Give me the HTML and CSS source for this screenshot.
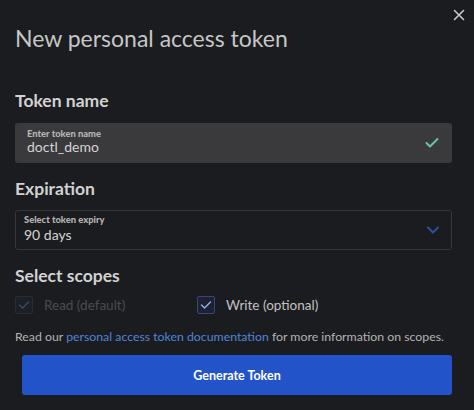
FILE: index.html
```html
<!DOCTYPE html>
<html lang="en">
<head>
<meta charset="utf-8">
<title>New personal access token</title>
<link rel="stylesheet" href="styles.css">
</head>
<body>
<div class="modal">
  <button class="close" aria-label="Close">
    <svg width="12" height="12" viewBox="0 0 12 12"><path d="M1.5 1.5 L10.5 10.5 M10.5 1.5 L1.5 10.5" stroke="#c9c9c9" stroke-width="1.6" fill="none" stroke-linecap="round"/></svg>
  </button>
  <h1 class="title">New personal access token</h1>

  <h2 class="section section-first">Token name</h2>
  <div class="field field-filled">
    <div class="field-text">
      <div class="field-label">Enter token name</div>
      <div class="field-value">doctl_demo</div>
    </div>
    <svg class="field-icon" width="14" height="12" viewBox="0 0 14 12"><path d="M1.5 6 L5 9.5 L12.5 2" stroke="#6cc49c" stroke-width="2" fill="none" stroke-linecap="round" stroke-linejoin="round"/></svg>
  </div>

  <h2 class="section">Expiration</h2>
  <div class="field field-select">
    <div class="field-text">
      <div class="field-label">Select token expiry</div>
      <div class="field-value">90 days</div>
    </div>
    <svg class="field-icon chevron" width="14" height="10" viewBox="0 0 14 10"><path d="M2 2.5 L7 7.5 L12 2.5" stroke="#2a559c" stroke-width="2" fill="none" stroke-linecap="round" stroke-linejoin="round"/></svg>
  </div>

  <h2 class="section">Select scopes</h2>
  <div class="scopes">
    <label class="scope scope-disabled">
      <span class="box"><svg width="12" height="10" viewBox="0 0 12 10"><path d="M1.5 5 L4.5 8 L10.5 2" stroke="#3a4a66" stroke-width="1.4" fill="none" stroke-linecap="round" stroke-linejoin="round"/></svg></span>
      <span class="scope-text">Read (default)</span>
    </label>
    <label class="scope scope-on">
      <span class="box"><svg width="12" height="10" viewBox="0 0 12 10"><path d="M1.5 5 L4.5 8 L10.5 2" stroke="#8fb3ea" stroke-width="1.4" fill="none" stroke-linecap="round" stroke-linejoin="round"/></svg></span>
      <span class="scope-text">Write (optional)</span>
    </label>
  </div>

  <p class="info">Read our <a href="#">personal access token documentation</a> for more information on scopes.</p>

  <button class="primary">Generate Token</button>
</div>
</body>
</html>
```

FILE: styles.css
```css
* { box-sizing: border-box; }
html, body { margin: 0; padding: 0; }
body {
  background: #1b1c1f;
  width: 474px;
  height: 410px;
  overflow: hidden;
  font-family: Lato, "Open Sans", "Liberation Sans", sans-serif;
  color: #c9c9c9;
}
.modal {
  position: relative;
  display: flex;
  flex-direction: column;
  padding: 24px 22px 0 15px;
}
.close {
  position: absolute;
  top: 9px;
  right: 9px;
  width: 12px;
  height: 12px;
  padding: 0;
  border: 0;
  background: none;
  display: flex;
}
.title {
  margin: 0;
  font-size: 23px;
  line-height: 28px;
  font-weight: 400;
  color: #c6c6c6;
}
.section {
  margin: 15px 0 0;
  font-size: 17.5px;
  line-height: 22px;
  font-weight: 700;
  color: #d2d2d2;
}
.section-first { margin-top: 38px; }
.field {
  display: flex;
  align-items: center;
  height: 40px;
  border-radius: 3px;
  margin-top: 11px;
}
.field-filled {
  background: #3a3a3c;
  padding: 6px 13px 6px 12px;
}
.field-select {
  margin-top: 10px;
  border: 1px solid #36373a;
  padding: 4px 11px 4px 8px;
}
.field-text { flex: 1; display: flex; flex-direction: column; align-self: flex-start; }
.field-label {
  font-size: 9.4px;
  line-height: 10px;
  font-weight: 900;
  color: #b4b4b4;
}
.field-value {
  font-size: 14px;
  line-height: 18px;
  color: #d4d4d4;
}
.field-filled .field-value { margin-top: -1px; }
.field-select .field-value { margin-top: 1px; }
.scopes {
  display: flex;
  margin-top: 9px;
}
.scope {
  display: flex;
  align-items: center;
  gap: 11px;
  font-size: 13.5px;
  line-height: 18px;
}
.scope-disabled { width: 182px; color: #4b4b4d; }
.scope-on { color: #c2c2c2; }
.box {
  width: 18px;
  height: 18px;
  border-radius: 2px;
  display: flex;
  align-items: center;
  justify-content: center;
}
.scope-disabled .box { border: 1px solid #262c3a; background: #1c1f26; }
.scope-on .box { border: 1px solid #34487a; background: #1d2131; }
.info {
  margin: 14px 0 0;
  font-size: 12.3px;
  line-height: 18px;
  color: #b3b3b3;
  white-space: nowrap;
}
.info a { color: #4d86d8; text-decoration: none; }
.primary {
  margin: 9px 0 0 7px;
  height: 40px;
  border: 0;
  border-radius: 3px;
  background: #2253c8;
  color: #ffffff;
  font-family: inherit;
  font-size: 12.5px;
  font-weight: 700;
}
```
